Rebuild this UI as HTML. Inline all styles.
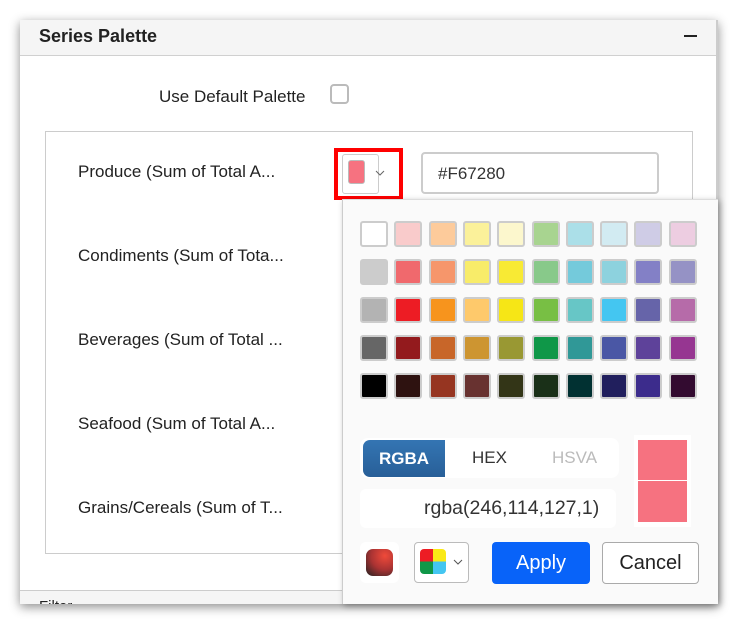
<!DOCTYPE html>
<html><head><meta charset="utf-8"><style>
*{box-sizing:border-box;margin:0;padding:0}
body{width:741px;height:624px;background:#fff;font-family:"Liberation Sans",sans-serif;position:relative;overflow:hidden}
.a{position:absolute}
.panel{left:20px;top:20px;width:698px;height:584px;background:#fff;border-right:2px solid #ccc;box-shadow:0 3px 10px rgba(0,0,0,.45)}
.hdr{left:20px;top:20px;width:696px;height:36px;background:#f5f5f5;border-bottom:1px solid #d0d0d0}
.lbl{font-size:17px;color:#222}
.sw{position:absolute;width:28px;height:26px;border:2px solid #ccc;border-radius:3px}
</style></head><body>
<div class="a panel"></div>
<div class="a hdr"></div>
<div class="a" style="left:39px;top:26px;font-size:18px;font-weight:bold;color:#222">Series Palette</div>
<div class="a" style="left:684px;top:35px;width:13px;height:2px;background:#222"></div>
<div class="a lbl" style="left:159px;top:87px">Use Default Palette</div>
<div class="a" style="left:330px;top:84px;width:19px;height:20px;border:2px solid #bbb;border-radius:4px"></div>
<div class="a" style="left:45px;top:131px;width:648px;height:423px;border:1px solid #ccc"></div>
<div class="a lbl" style="left:78px;top:162px">Produce (Sum of Total A...</div>
<div class="a lbl" style="left:78px;top:246px">Condiments (Sum of Tota...</div>
<div class="a lbl" style="left:78px;top:330px">Beverages (Sum of Total ...</div>
<div class="a lbl" style="left:78px;top:414px">Seafood (Sum of Total A...</div>
<div class="a lbl" style="left:78px;top:498px">Grains/Cereals (Sum of T...</div>
<div class="a" style="left:20px;top:590px;width:696px;height:14px;background:#f5f5f5;border-top:1px solid #ccc"></div>
<div class="a" style="left:39px;top:599px;font-size:15px;color:#222;height:5px;overflow:hidden;line-height:15px">Filter</div>
<div class="a" style="left:334px;top:148px;width:69px;height:52px;border:4px solid #f00"></div>
<div class="a" style="left:342px;top:154px;width:37px;height:40px;border:1px solid #ccc;border-radius:3px;background:#fff"></div>
<div class="a" style="left:348px;top:160px;width:17px;height:24px;background:#f67280;border:1px solid #bbb;border-radius:3px"></div>
<svg class="a" style="left:374px;top:169px" width="12" height="8"><path d="M2 2l4 4 4-4" stroke="#666" fill="none"/></svg>
<div class="a" style="left:421px;top:152px;width:238px;height:42px;border:2px solid #ccc;border-radius:4px"></div>
<div class="a" style="left:438px;top:164px;font-size:17px;color:#333">#F67280</div>
<div class="a" style="left:342px;top:199px;width:376px;height:405px;background:#fafafa;border-left:1px solid #ccc;border-top:1px solid #ddd;box-shadow:2px 2px 6px rgba(0,0,0,.3)"></div>
<div id="g"></div>
<script>
var c=[["#fff","#f9cbcb","#fdcb9b","#fbf19a","#fcf7cd","#a8d490","#abdfe8","#d2ebf2","#cfcce6","#edcde1"],
["#ccc","#f0696d","#f6966b","#f8ec69","#f8ea34","#88c98a","#74cadb","#8dd2de","#8380c6","#9592c5"],
["#b3b3b3","#ed1c24","#f7941d","#fec96b","#f6e616","#78bf44","#67c6c6","#44c6f1","#6664a9","#b66ba9"],
["#666","#931a1d","#c86629","#cd9531","#999833","#0f9748","#309897","#4a57a5","#5e429a","#963691"],
["#000","#2e1210","#963521","#683230","#333517","#1a3018","#013132","#211f5d","#3c2c8c","#330b30"]];
var h="";for(var r=0;r<5;r++)for(var k=0;k<10;k++)h+='<div class="sw" style="left:'+(360+k*34.3)+'px;top:'+(221+r*38)+'px;background:'+c[r][k]+'"></div>';
document.getElementById("g").innerHTML=h;
</script>
<div class="a" style="left:360px;top:438px;width:259px;height:40px;background:#fff;border-radius:8px"></div>
<div class="a" style="left:363px;top:440px;width:82px;height:37px;background:linear-gradient(#3475b3,#285f98);border-radius:7px 0 0 7px;color:#fff;font-weight:bold;font-size:17px;text-align:center;line-height:37px">RGBA</div>
<div class="a" style="left:472px;top:448px;font-size:17px;color:#333">HEX</div>
<div class="a" style="left:552px;top:448px;font-size:17px;color:#bbb">HSVA</div>
<div class="a" style="left:360px;top:489px;width:256px;height:39px;background:#fff;border-radius:6px"></div>
<div class="a" style="left:424px;top:497px;font-size:19.5px;color:#333">rgba(246,114,127,1)</div>
<div class="a" style="left:634px;top:435px;width:57px;height:92px;background:#fff"></div>
<div class="a" style="left:638px;top:440px;width:49px;height:40px;background:#f67280"></div>
<div class="a" style="left:638px;top:481px;width:49px;height:41px;background:#f67280"></div>
<div class="a" style="left:360px;top:542px;width:39px;height:41px;background:#fff;border-radius:6px"></div>
<div class="a" style="left:366px;top:549px;width:27px;height:27px;border-radius:7px;background:radial-gradient(circle at 70% 25%,#f04a3a,#a33 50%,#222)"></div>
<div class="a" style="left:414px;top:542px;width:55px;height:41px;border:1px solid #bbb;border-radius:4px;background:#fff"></div>
<div class="a" style="left:420px;top:549px;width:26px;height:25px;border-radius:4px;overflow:hidden;background:conic-gradient(#fae916 0 25%,#44c6f1 0 50%,#0f9748 0 75%,#ed1c24 0)"></div>
<svg class="a" style="left:452px;top:558px" width="12" height="8"><path d="M2 2l4 4 4-4" stroke="#555" fill="none"/></svg>
<div class="a" style="left:492px;top:542px;width:98px;height:42px;background:#0863f9;border-radius:4px;color:#fff;font-size:20px;text-align:center;line-height:42px">Apply</div>
<div class="a" style="left:602px;top:542px;width:97px;height:42px;border:1px solid #aaa;border-radius:4px;background:#fff;color:#222;font-size:20px;text-align:center;line-height:40px">Cancel</div>
</body></html>
